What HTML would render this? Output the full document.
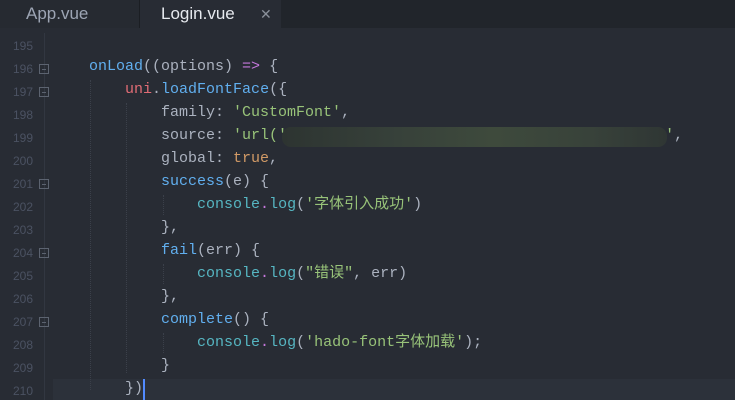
<!DOCTYPE html><html><head><meta charset="utf-8"><style>
body{margin:0;width:735px;height:400px;background:#282c34;overflow:hidden;position:relative;font-family:"Liberation Mono","Noto Sans CJK SC",monospace}
.tabs{position:absolute;left:0;top:0;width:735px;height:28px;background:#21252b}
.tab{position:absolute;top:0;height:28px;font:17px "Liberation Sans","DejaVu Sans",sans-serif;line-height:28px}
.ln{position:absolute;left:0;width:33px;text-align:right;font-size:12px;color:#4b5262;font-family:"Liberation Sans",sans-serif}
.code{position:absolute;font-size:15px;white-space:pre;color:#abb2bf;line-height:20px}
.f{color:#61afef}.s{color:#98c379}.r{color:#e06c75}.o{color:#d19a66}.c{color:#56b6c2}.p{color:#c678dd}
.fold{position:absolute;left:39px;width:8px;height:8px;border:1px solid #5c6370}
.fold:after{content:"";position:absolute;left:2px;top:3.5px;width:4px;height:1px;background:#5c6370}
.g{position:absolute;width:0;border-left:1px dotted #3b404a}
</style></head><body>
<div class="tabs">
<div class="tab" style="left:0;width:139px;background:#262a31;border-right:1px solid #1b1e23;color:#9da5b4"><span style="margin-left:26px">App.vue</span></div>
<div class="tab" style="left:140px;width:141px;background:#282c34;color:#e6e9ee"><span style="margin-left:21px">Login.vue</span><span style="position:absolute;left:120px;color:#8a909a;font-size:14px">✕</span></div>
</div>
<div style="position:absolute;left:44px;top:33px;width:1px;height:367px;background:#323741"></div>
<div style="position:absolute;left:53px;top:379px;width:682px;height:21px;background:#2c313a"></div>
<div style="position:absolute;left:143px;top:379px;width:2px;height:21px;background:#528bff"></div>
<div class="g" style="left:90px;top:80px;height:310px"></div>
<div class="g" style="left:126px;top:103px;height:270px"></div>
<div class="g" style="left:163px;top:195px;height:20px"></div>
<div class="g" style="left:163px;top:264px;height:20px"></div>
<div class="g" style="left:163px;top:333px;height:20px"></div>
<div style="position:absolute;left:282px;top:127px;width:385px;height:20px;border-radius:9px;background:linear-gradient(90deg,#2d3431,#37413a 30%,#3e4a3c 55%,#38423a 80%,#2f3634)"></div>
<div id="n"></div>
<script>
var L=[
"",
"<span class=f>onLoad</span>((options) <span class=p>=&gt;</span> {",
"    <span class=r>uni</span>.<span class=f>loadFontFace</span>({",
"        family: <span class=s>'CustomFont'</span>,",
"        source: <span class=s>'url('</span>                                          <span class=s>'</span>,",
"        global: <span class=o>true</span>,",
"        <span class=f>success</span>(e) {",
"            <span class=c>console</span><span class=p>.</span><span class=c>log</span>(<span class=s>'字体引入成功'</span>)",
"        },",
"        <span class=f>fail</span>(err) {",
"            <span class=c>console</span><span class=p>.</span><span class=c>log</span>(<span class=s>\"错误\"</span>, err)",
"        },",
"        <span class=f>complete</span>() {",
"            <span class=c>console</span><span class=p>.</span><span class=c>log</span>(<span class=s>'hado-font字体加载'</span>);",
"        }",
"    })"];
var folds=[1,2,6,9,12],h="";
for(var i=0;i<16;i++){var y=46+23*i;
h+='<div class="ln" style="top:'+(y-7)+'px">'+(195+i)+'</div>';
if(folds.indexOf(i)>=0)h+='<div class="fold" style="top:'+(y-5)+'px"></div>';
h+='<div class="code" style="left:89px;top:'+(y-12)+'px">'+L[i]+'</div>';}
document.getElementById('n').innerHTML=h;
</script>
</body></html>
